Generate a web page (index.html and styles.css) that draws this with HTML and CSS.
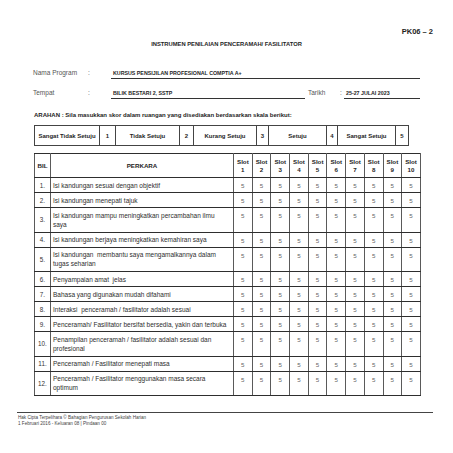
FILE: index.html
```html
<!DOCTYPE html>
<html lang="ms">
<head>
<meta charset="utf-8">
<title>Instrumen Penilaian Penceramah/ Fasilitator</title>
<link rel="stylesheet" href="styles.css">
</head>
<body>
<div class="code b">PK06 – 2</div>
<div class="title b">INSTRUMEN PENILAIAN PENCERAMAH/ FASILITATOR</div>

<div class="form">
  <div class="row">
    <span class="label">Nama Program</span>
    <span class="colon">:</span>
    <span class="field b">KURSUS PENSIJILAN PROFESIONAL COMPTIA A+</span>
  </div>
  <div class="row">
    <span class="label">Tempat</span>
    <span class="colon">:</span>
    <span class="field field-place b">BILIK BESTARI 2, SSTP</span>
    <span class="label label-date">Tarikh</span>
    <span class="colon colon-date">:</span>
    <span class="field b">25-27 JULAI 2023</span>
  </div>
</div>

<div class="note b">ARAHAN : Sila masukkan skor dalam ruangan yang disediakan berdasarkan skala berikut:</div>

<table class="scale b">
  <colgroup>
    <col class="s-wide1"><col class="s-n1"><col class="s-wide2"><col class="s-n2"><col class="s-wide3"><col class="s-n3"><col class="s-wide4"><col class="s-n4"><col class="s-wide5"><col class="s-n5">
  </colgroup>
  <tr>
    <td>Sangat Tidak Setuju</td><td>1</td>
    <td>Tidak Setuju</td><td>2</td>
    <td>Kurang Setuju</td><td>3</td>
    <td>Setuju</td><td>4</td>
    <td>Sangat Setuju</td><td>5</td>
  </tr>
</table>

<table class="grid">
  <colgroup>
    <col class="c-bil"><col class="c-item">
    <col class="c-slot"><col class="c-slot"><col class="c-slot"><col class="c-slot"><col class="c-slot"><col class="c-slot"><col class="c-slot"><col class="c-slot"><col class="c-slot"><col class="c-slot">
  </colgroup>
  <thead>
    <tr class="head b">
      <th>BIL</th><th>PERKARA</th>
      <th>Slot<br>1</th><th>Slot<br>2</th><th>Slot<br>3</th><th>Slot<br>4</th><th>Slot<br>5</th><th>Slot<br>6</th><th>Slot<br>7</th><th>Slot<br>8</th><th>Slot<br>9</th><th>Slot<br>10</th>
    </tr>
  </thead>
  <tbody>
    <tr class="one"><td class="bil">1.</td><td class="item">Isi kandungan sesuai dengan objektif</td><td>5</td><td>5</td><td>5</td><td>5</td><td>5</td><td>5</td><td>5</td><td>5</td><td>5</td><td>5</td></tr>
    <tr class="one"><td class="bil">2.</td><td class="item">Isi kandungan menepati tajuk</td><td>5</td><td>5</td><td>5</td><td>5</td><td>5</td><td>5</td><td>5</td><td>5</td><td>5</td><td>5</td></tr>
    <tr class="two"><td class="bil">3.</td><td class="item">Isi kandungan mampu meningkatkan percambahan ilmu<br>saya</td><td>5</td><td>5</td><td>5</td><td>5</td><td>5</td><td>5</td><td>5</td><td>5</td><td>5</td><td>5</td></tr>
    <tr class="one"><td class="bil">4.</td><td class="item">Isi kandungan berjaya meningkatkan kemahiran saya</td><td>5</td><td>5</td><td>5</td><td>5</td><td>5</td><td>5</td><td>5</td><td>5</td><td>5</td><td>5</td></tr>
    <tr class="two"><td class="bil">5.</td><td class="item">Isi kandungan &nbsp;membantu saya mengamalkannya dalam<br>tugas seharian</td><td>5</td><td>5</td><td>5</td><td>5</td><td>5</td><td>5</td><td>5</td><td>5</td><td>5</td><td>5</td></tr>
    <tr class="one"><td class="bil">6.</td><td class="item">Penyampaian amat &nbsp;jelas</td><td>5</td><td>5</td><td>5</td><td>5</td><td>5</td><td>5</td><td>5</td><td>5</td><td>5</td><td>5</td></tr>
    <tr class="one"><td class="bil">7.</td><td class="item">Bahasa yang digunakan mudah difahami</td><td>5</td><td>5</td><td>5</td><td>5</td><td>5</td><td>5</td><td>5</td><td>5</td><td>5</td><td>5</td></tr>
    <tr class="one"><td class="bil">8.</td><td class="item">Interaksi &nbsp;penceramah / fasilitator adalah sesuai</td><td>5</td><td>5</td><td>5</td><td>5</td><td>5</td><td>5</td><td>5</td><td>5</td><td>5</td><td>5</td></tr>
    <tr class="one"><td class="bil">9.</td><td class="item">Penceramah/ Fasilitator bersifat bersedia, yakin dan terbuka</td><td>5</td><td>5</td><td>5</td><td>5</td><td>5</td><td>5</td><td>5</td><td>5</td><td>5</td><td>5</td></tr>
    <tr class="two"><td class="bil">10.</td><td class="item">Penampilan penceramah / fasilitator adalah sesuai dan<br>profesional</td><td>5</td><td>5</td><td>5</td><td>5</td><td>5</td><td>5</td><td>5</td><td>5</td><td>5</td><td>5</td></tr>
    <tr class="one"><td class="bil">11.</td><td class="item">Penceramah / Fasilitator menepati masa</td><td>5</td><td>5</td><td>5</td><td>5</td><td>5</td><td>5</td><td>5</td><td>5</td><td>5</td><td>5</td></tr>
    <tr class="two"><td class="bil">12.</td><td class="item">Penceramah / Fasilitator menggunakan masa secara<br>optimum</td><td>5</td><td>5</td><td>5</td><td>5</td><td>5</td><td>5</td><td>5</td><td>5</td><td>5</td><td>5</td></tr>
  </tbody>
</table>

<div class="footer">
  <div class="footline"></div>
  <div class="foottext">Hak Cipta Terpelihara © Bahagian Pengurusan Sekolah Harian<br>1 Februari 2016 - Keluaran 08 | Pindaan 00</div>
</div>
</body>
</html>
```
FILE: styles.css
```css
* { box-sizing: border-box; }
html, body { margin: 0; padding: 0; background: #fff; }
body {
  width: 453px;
  height: 453px;
  overflow: hidden;
  font-family: "Liberation Sans", Arial, sans-serif;
  color: #2a2a2a;
}
.b {
  font-family: "Liberation Sans Narrow", "Liberation Sans", Arial, sans-serif;
  font-weight: 700;
  color: #1e1e1e;
}

.code {
  padding: 28px 20px 0 0;
  text-align: right;
  font-size: 7.5px;
  line-height: 8px;
}
.title {
  margin-top: 4px;
  text-align: center;
  font-size: 5.8px;
  line-height: 8px;
}

.form {
  margin: 20px 33px 0 33px;
  display: flex;
  flex-direction: column;
  gap: 9px;
}
.row {
  display: flex;
  height: 11px;
  font-size: 6.5px;
  line-height: 10px;
}
.label { width: 55px; color: #555; font-weight: 400; }
.colon { width: 23px; color: #555; }
.field {
  flex: 1;
  padding-left: 2px;
  border-bottom: 1px solid #333;
  font-size: 5.3px;
  white-space: nowrap;
}
.field-place { flex: 0 0 194px; }
.label-date { width: 32px; margin-left: 3px; }
.colon-date { width: 4px; }

.note {
  margin: 12px 0 0 34px;
  font-size: 6px;
  line-height: 8px;
}

.scale {
  margin: 6px 0 0 34px;
  border-collapse: collapse;
  table-layout: fixed;
  width: 374px;
  font-size: 6px;
}
.scale td {
  height: 20px;
  padding: 0;
  border: 1px solid #444;
  text-align: center;
  vertical-align: middle;
}
.s-wide1 { width: 65px; }
.s-n1 { width: 16px; }
.s-wide2 { width: 64px; }
.s-n2 { width: 14px; }
.s-wide3 { width: 63px; }
.s-n3 { width: 12px; }
.s-wide4 { width: 58px; }
.s-n4 { width: 11px; }
.s-wide5 { width: 58px; }
.s-n5 { width: 13px; }

.grid {
  margin: 7px 0 0 34px;
  border-collapse: collapse;
  table-layout: fixed;
  width: 386px;
}
.c-bil { width: 16px; }
.c-item { width: 183px; }
.c-slot { width: 18.7px; }

.grid th, .grid td {
  padding: 0;
  border-left: 1px solid #5a5a5a;
  border-right: 1px solid #5a5a5a;
  border-top: 1px solid #2e2e2e;
  border-bottom: 1px solid #2e2e2e;
}
.head th {
  height: 24px;
  font-size: 6.2px;
  line-height: 8px;
  text-align: center;
  vertical-align: middle;
}
.grid td {
  font-size: 6.2px;
  line-height: 9px;
  color: #666;
  text-align: center;
  vertical-align: top;
  padding-top: 3px;
}
.grid tr.one td { height: 15px; }
.grid tr.two td { height: 24.5px; }
.grid td.bil {
  color: #333;
  font-size: 6.3px;
  vertical-align: middle;
  padding-top: 0;
}
.grid td.item {
  text-align: left;
  color: #2e2e2e;
  font-size: 6.5px;
  padding: 0 0 0 2px;
  vertical-align: middle;
  white-space: nowrap;
}

.footer { margin-top: 16px; }
.footline {
  margin: 0 20px 0 17px;
  border-top: 1px solid #444;
}
.foottext {
  margin-top: 2px;
  padding-left: 18px;
  font-size: 4.6px;
  line-height: 6px;
  color: #444;
}
```
